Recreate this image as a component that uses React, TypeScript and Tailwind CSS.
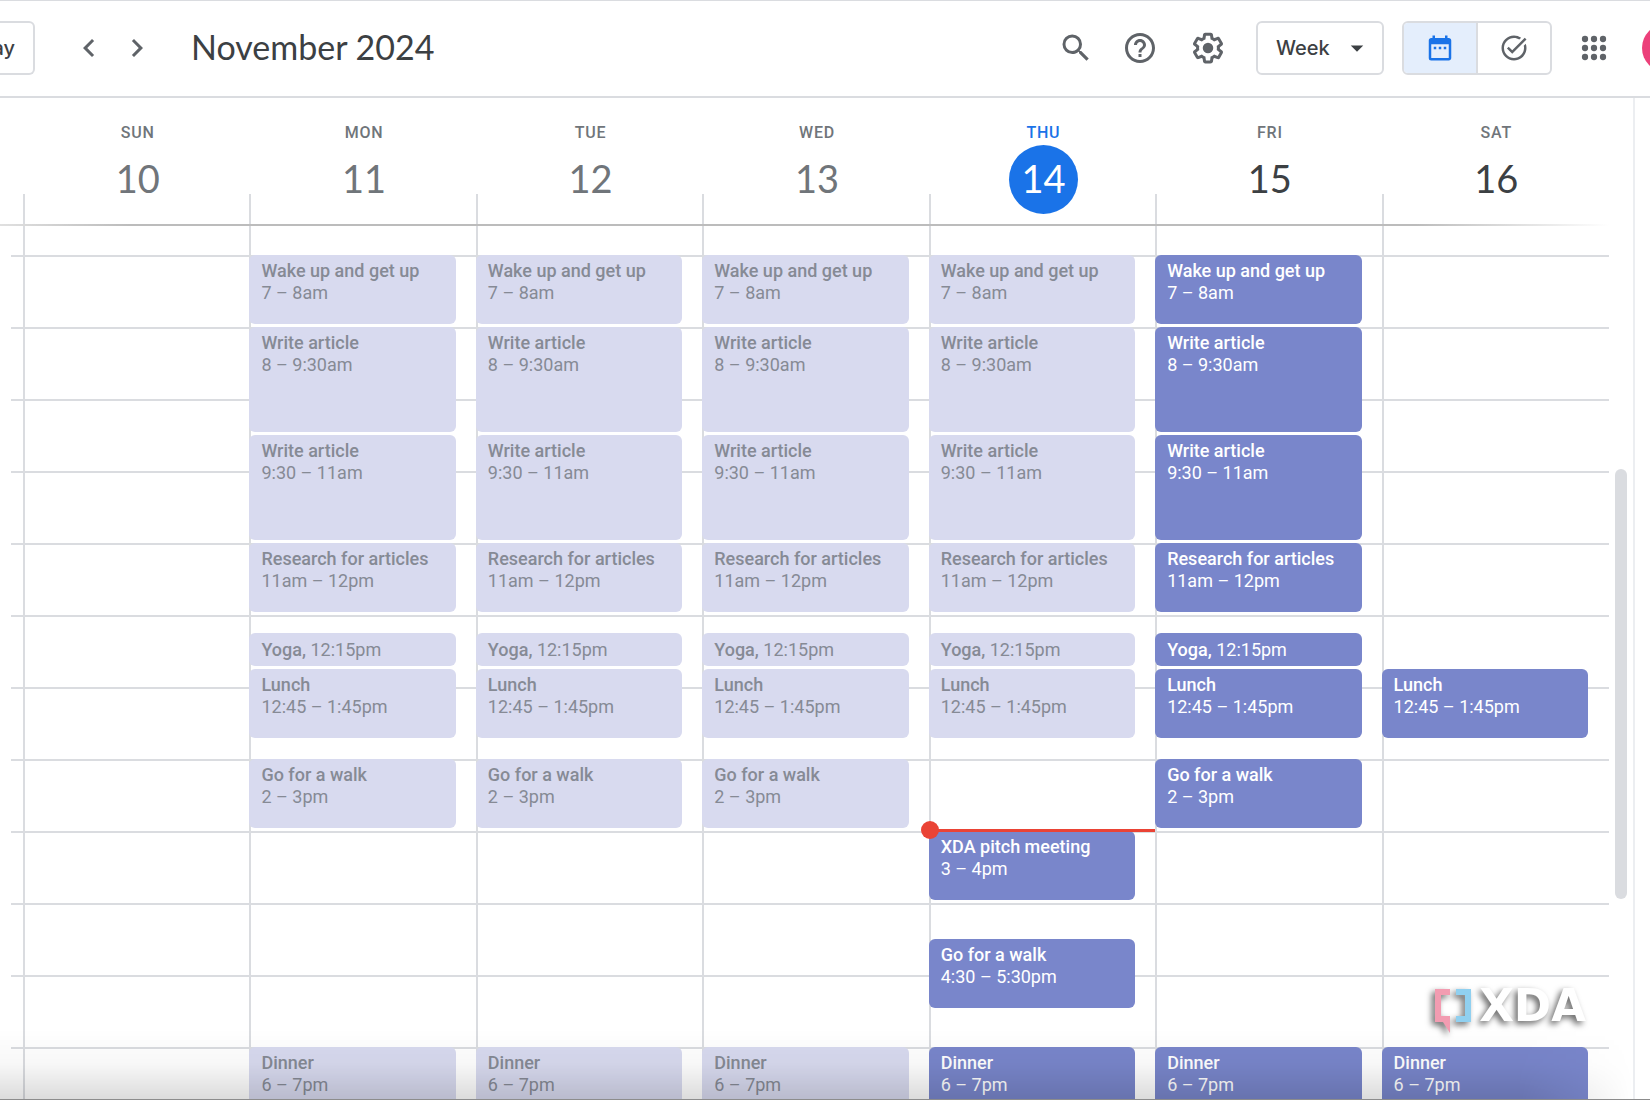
import { MdArrowDropDown, MdChevronLeft, MdChevronRight, MdDateRange, MdHelpOutline, MdSearch } from "react-icons/md";

interface CalendarEvent {
  title: string;
  time: string;
  // grid row line, one row per quarter hour, 7am is row 2
  start: number;
  length: number;
  past?: boolean;
}

interface Day {
  name: string;
  date: number;
  state: "past" | "today" | "upcoming";
  events: CalendarEvent[];
}

const wake = { title: "Wake up and get up", time: "7 – 8am", start: 2, length: 4 };
const writeEarly = { title: "Write article", time: "8 – 9:30am", start: 6, length: 6 };
const writeLate = { title: "Write article", time: "9:30 – 11am", start: 12, length: 6 };
const research = { title: "Research for articles", time: "11am – 12pm", start: 18, length: 4 };
const yoga = { title: "Yoga", time: "12:15pm", start: 23, length: 2 };
const lunch = { title: "Lunch", time: "12:45 – 1:45pm", start: 25, length: 4 };
const walk = { title: "Go for a walk", time: "2 – 3pm", start: 30, length: 4 };
const pitch = { title: "XDA pitch meeting", time: "3 – 4pm", start: 34, length: 4 };
const lateWalk = { title: "Go for a walk", time: "4:30 – 5:30pm", start: 40, length: 4 };
const dinner = { title: "Dinner", time: "6 – 7pm", start: 46, length: 4 };

const morning = [wake, writeEarly, writeLate, research, yoga, lunch];
const past = (events: CalendarEvent[]) => events.map((e) => ({ ...e, past: true }));

const days: Day[] = [
  { name: "Sun", date: 10, state: "past", events: [] },
  { name: "Mon", date: 11, state: "past", events: past([...morning, walk, dinner]) },
  { name: "Tue", date: 12, state: "past", events: past([...morning, walk, dinner]) },
  { name: "Wed", date: 13, state: "past", events: past([...morning, walk, dinner]) },
  { name: "Thu", date: 14, state: "today", events: [...past(morning), pitch, lateWalk, dinner] },
  { name: "Fri", date: 15, state: "upcoming", events: [...morning, walk, dinner] },
  { name: "Sat", date: 16, state: "upcoming", events: [lunch, dinner] },
];

const hours = Array.from({ length: 12 }, (_, i) => i + 7);

function GearIcon() {
  return (
    <svg viewBox="0 0 24 24" className="size-9" fill="currentColor">
      <path d="M13.85 22.25h-3.7c-.74 0-1.36-.54-1.45-1.27l-.27-1.89c-.27-.14-.53-.29-.79-.46l-1.8.72c-.7.26-1.47-.03-1.81-.65L2.2 15.53c-.35-.66-.2-1.44.36-1.88l1.53-1.19c-.01-.15-.02-.3-.02-.46 0-.15.01-.31.02-.46l-1.52-1.19c-.59-.45-.74-1.26-.37-1.88l1.85-3.19c.34-.62 1.11-.9 1.79-.63l1.81.73c.26-.17.52-.32.78-.46l.27-1.91c.09-.7.71-1.25 1.44-1.25h3.7c.74 0 1.36.54 1.45 1.27l.27 1.89c.27.14.53.29.79.46l1.8-.72c.71-.26 1.48.03 1.82.65l1.84 3.18c.36.66.2 1.44-.36 1.88l-1.52 1.19c.01.15.02.3.02.46s-.01.31-.02.46l1.52 1.19c.56.45.72 1.23.37 1.86l-1.86 3.22c-.34.62-1.11.9-1.8.63l-1.8-.72c-.26.17-.52.32-.78.46l-.27 1.91c-.1.68-.72 1.22-1.46 1.22zm-3.23-2h2.76l.37-2.55.53-.22c.44-.18.88-.44 1.34-.78l.45-.34 2.38.96 1.38-2.4-2.03-1.58.07-.56c.03-.26.06-.51.06-.78s-.03-.53-.06-.78l-.07-.56 2.03-1.58-1.39-2.4-2.39.96-.45-.35c-.42-.32-.87-.58-1.33-.77l-.52-.22-.37-2.55h-2.76l-.37 2.55-.53.21c-.44.19-.88.44-1.34.79l-.45.33-2.38-.95-1.39 2.39 2.03 1.58-.07.56a7 7 0 0 0-.06.79c0 .26.02.53.06.78l.07.56-2.03 1.58 1.38 2.4 2.39-.96.45.35c.43.33.86.58 1.33.77l.53.22.38 2.55z" />
      <circle cx="12" cy="12" r="3.5" />
    </svg>
  );
}

function AppsIcon() {
  return (
    <svg viewBox="0 0 24 24" className="size-9" fill="currentColor">
      {[6, 12, 18].map((cy) =>
        [6, 12, 18].map((cx) => <circle key={`${cx}-${cy}`} cx={cx} cy={cy} r="2.1" />)
      )}
    </svg>
  );
}

function TasksIcon() {
  return (
    <svg viewBox="0 0 24 24" className="size-[30px]" fill="currentColor">
      <path d="M22 5.18 10.59 16.6l-4.24-4.24 1.41-1.41 2.83 2.83 10-10L22 5.18zm-2.21 5.04c.13.57.21 1.17.21 1.78 0 4.42-3.58 8-8 8s-8-3.58-8-8 3.58-8 8-8c1.58 0 3.04.46 4.28 1.25l1.44-1.44A9.9 9.9 0 0 0 12 2C6.48 2 2 6.48 2 12s4.48 10 10 10 10-4.48 10-10c0-1.19-.22-2.33-.6-3.39l-1.61 1.61z" />
    </svg>
  );
}

function TopBar() {
  return (
    <header className="flex h-[98px] shrink-0 items-center border-b-2 border-t border-[#dadce0] pb-px text-[#5f6368]">
      <div className="flex h-[54px] w-[35px] shrink-0 justify-end overflow-hidden rounded-r-md border-2 border-l-0 border-[#dadce0] pr-[18px]">
        <button type="button" className="font-[Inter,sans-serif] text-xl font-medium text-[#3c4043]">
          Today
        </button>
      </div>
      <button type="button" aria-label="Previous week" className="ml-9">
        <MdChevronLeft className="size-9" />
      </button>
      <button type="button" aria-label="Next week" className="ml-3">
        <MdChevronRight className="size-9" />
      </button>
      <h1 className="ml-9 pb-0.5 font-[Lato,sans-serif] text-[34px] leading-10 text-[#3c4043]">November 2024</h1>

      <button type="button" aria-label="Search" className="ml-auto">
        <MdSearch className="size-9" />
      </button>
      <button type="button" aria-label="Help" className="ml-7">
        <MdHelpOutline className="size-9" />
      </button>
      <button type="button" aria-label="Settings" className="ml-8">
        <GearIcon />
      </button>
      <div className="relative ml-[30px] h-[54px] w-32 shrink-0">
        <select
          aria-label="View"
          className="size-full appearance-none rounded-md border-2 border-[#dadce0] bg-transparent pl-[18px] font-[Inter,sans-serif] text-xl font-medium text-[#3c4043]"
        >
          <option>Week</option>
          <option>Day</option>
          <option>Month</option>
        </select>
        <MdArrowDropDown className="pointer-events-none absolute right-3 top-3 size-[30px] text-[#3c4043]" />
      </div>
      <div className="ml-[18px] flex h-[54px] w-[150px] shrink-0 overflow-hidden rounded-md border-2 border-[#dadce0]">
        <button
          type="button"
          aria-label="Calendar"
          className="flex flex-1 items-center justify-center border-r-2 border-[#dadce0] bg-[#e4eefc] text-[#1a73e8]"
        >
          <MdDateRange className="size-[30px]" />
        </button>
        <button type="button" aria-label="Tasks" className="flex flex-1 items-center justify-center">
          <TasksIcon />
        </button>
      </div>
      <button type="button" aria-label="Google apps" className="ml-6">
        <AppsIcon />
      </button>
      <div className="ml-[30px] w-2 shrink-0 overflow-hidden">
        <button type="button" aria-label="Account" className="block size-12 rounded-full bg-[#ec407a]" />
      </div>
    </header>
  );
}

function DayHeading({ day }: { day: Day }) {
  const today = day.state === "today";
  const dateColor = today
    ? "bg-[#1a73e8] text-white"
    : day.state === "past"
      ? "text-[#70757a]"
      : "text-[#3c4043]";
  return (
    <div className="relative flex h-[103px] flex-col items-center pl-[3px] before:absolute before:bottom-0 before:left-0 before:h-[30px] before:w-0.5 before:bg-[#dadce0]">
      <span
        className={`text-base font-medium uppercase leading-6 tracking-wider ${today ? "text-[#1a73e8]" : "text-[#70757a]"}`}
      >
        {day.name}
      </span>
      <span
        className={`flex size-[69px] items-center justify-center rounded-full pb-1 font-[Lato,sans-serif] text-[38px] leading-none ${dateColor}`}
      >
        {day.date}
      </span>
    </div>
  );
}

function EventCard({ event }: { event: CalendarEvent }) {
  const color = event.past ? "bg-[#d8daef] text-[#868a95]" : "bg-[#7986cb] text-white";
  const short = event.length <= 2;
  return (
    <button
      type="button"
      className={`-ml-0.5 mb-[3px] mr-5 flex flex-col items-start rounded-md px-3 text-left text-lg leading-[22px] ${color} ${short ? "justify-center" : "pt-[5px]"}`}
      style={{ gridRow: `${event.start} / span ${event.length}` }}
    >
      {short ? (
        <span>
          <span className="font-medium">{event.title},</span> {event.time}
        </span>
      ) : (
        <>
          <span className="font-medium">{event.title}</span>
          <span>{event.time}</span>
        </>
      )}
    </button>
  );
}

function NowMarker() {
  return (
    <div className="absolute -left-0.5 right-0 top-[603px] h-[3px] bg-[#ea4335]">
      <div className="absolute -left-2 -top-2 size-[18px] rounded-full bg-[#ea4335]" />
    </div>
  );
}

function Watermark() {
  return (
    <div className="pointer-events-none absolute bottom-[62px] right-16 flex h-12 items-start gap-2 drop-shadow-[-3px_3px_3px_rgba(0,0,0,0.6)]">
      <svg viewBox="0 0 36 44" className="h-11 w-9">
        <path d="M0 0H15V6H6V27H15V44L8 33H0Z" fill="#f29cb1" />
        <path d="M21 0H36V33H21V27H30V6H21Z" fill="#90d0f0" />
      </svg>
      <span className="font-['DejaVu_Sans',sans-serif] text-[45px] font-bold leading-[33px] text-white">XDA</span>
    </div>
  );
}

export default function App() {
  return (
    <div className="relative flex h-screen flex-col overflow-hidden border-b border-[#8c8c8c] bg-white font-[Roboto,sans-serif]">
      <TopBar />
      <main className="flex min-h-0 flex-1">
        <div className="flex min-w-0 flex-1 flex-col">
          <div className="grid shrink-0 grid-cols-7 pl-[23px] pr-px pt-[23px]">
            {days.map((day) => (
              <DayHeading key={day.name} day={day} />
            ))}
          </div>
          <div className="h-0.5 shrink-0 bg-[linear-gradient(to_right,#e0e0e0,#bcbcbc_8%,#bcbcbc_88%,#ffffff)]" />
          <div className="grid min-h-0 flex-1 grid-cols-1 overflow-hidden">
            <div className="col-start-1 row-start-1 ml-[11px] pt-[29px]">
              {hours.map((hour) => (
                <div key={hour} className="h-[72px] border-t-2 border-[#dadce0]" />
              ))}
            </div>
            <div className="col-start-1 row-start-1 grid grid-cols-7 pl-[23px] pr-px">
              {days.map((day) => (
                <div
                  key={day.name}
                  className="relative grid auto-rows-[18px] grid-cols-1 border-l-2 border-[#dadce0] pt-[11px]"
                >
                  {day.events.map((event) => (
                    <EventCard key={event.start} event={event} />
                  ))}
                  {day.state === "today" && <NowMarker />}
                </div>
              ))}
            </div>
          </div>
        </div>
        <div className="w-[26px] shrink-0 border-r-2 border-[#eceef1] pl-1.5 pt-[371px]">
          <div className="h-[430px] w-3 rounded-full bg-[#dadce0]" />
        </div>
        <div className="w-[15px] shrink-0" />
      </main>
      <div className="pointer-events-none absolute inset-x-0 bottom-0 h-[70px] bg-linear-to-b from-black/0 via-black/3 to-black/14 mask-r-from-92% mask-r-to-99%" />
      <Watermark />
    </div>
  );
}
